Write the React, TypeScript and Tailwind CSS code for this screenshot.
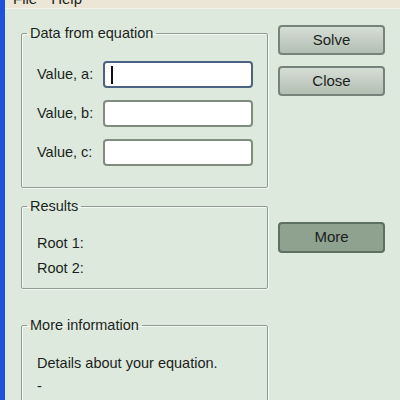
import React from "react";

const font = { fontFamily: '"Liberation Sans", Arial, sans-serif' };

function Group({
  title,
  className,
  children,
}: {
  title: string;
  className?: string;
  children: React.ReactNode;
}) {
  return (
    <fieldset
      className={`rounded-[2px] border border-[#919d91] shadow-[inset_1px_1px_0_#f4f8f4,1px_1px_0_#f4f8f4] ${className ?? ""}`}
    >
      <legend className="ml-[5px] px-[3px] text-[14.5px] leading-[18px] text-[#1b1f1b]">
        {title}
      </legend>
      {children}
    </fieldset>
  );
}

function Field({ label, focused }: { label: string; focused?: boolean }) {
  return (
    <div className="flex h-[27px] items-center">
      <span className="w-[81px] shrink-0 whitespace-nowrap pl-[15px] text-[14.5px] text-[#1b1f1b]">
        {label}
      </span>
      <div
        className={`flex h-[27px] w-[150px] items-center rounded-[4px] border-2 bg-white pl-[6px] ${
          focused ? "border-[#4b6283]" : "border-[#7f8d7f]"
        }`}
      >
        {focused && <span className="h-[18px] w-[2px] bg-[#111]" />}
      </div>
    </div>
  );
}

function Btn({ label, dark, className }: { label: string; dark?: boolean; className?: string }) {
  return (
    <button
      type="button"
      className={`flex w-[107px] items-center justify-center rounded-[4px] border-2 text-[15px] text-[#1b1f1b] ${
        dark
          ? "border-[#5e705f] bg-[#8fa290]"
          : "border-[#75837a] bg-gradient-to-b from-[#d6ddd6] to-[#b3bfb3]"
      } ${className ?? ""}`}
    >
      {label}
    </button>
  );
}

export default function App() {
  return (
    <div className="flex h-[400px] w-[400px] overflow-hidden bg-[#dde9dd]" style={font}>
      <div className="w-[5px] shrink-0 bg-[#1f50dc]" />
      <div className="flex min-w-0 flex-1 flex-col">
        <div className="h-[9px] shrink-0 overflow-hidden border-b border-[#f3f1e8] bg-[#ece6d6]">
          <div className="-mt-[10px] flex gap-[14px] pl-[8px] text-[15px] leading-[17px] text-[#1b1f1b]">
            <span>File</span>
            <span>Help</span>
          </div>
        </div>
        <div className="flex flex-1 pl-[16px]">
          <div className="flex w-[247px] flex-col pt-[15px]">
            <Group title="Data from equation" className="h-[164px]">
              <div className="flex flex-col gap-[12px] pt-[19px]">
                <Field label="Value, a:" focused />
                <Field label="Value, b:" />
                <Field label="Value, c:" />
              </div>
            </Group>
            <Group title="Results" className="mt-[9px] h-[92px]">
              <div className="flex flex-col gap-[8px] pl-[15px] pt-[20px] text-[14.5px] leading-[17px] text-[#1b1f1b]">
                <span>Root 1:</span>
                <span>Root 2:</span>
              </div>
            </Group>
            <Group title="More information" className="mt-[27px] h-[90px]">
              <div className="flex flex-col gap-[6px] pl-[15px] pt-[21px] text-[14.5px] leading-[17px] text-[#1b1f1b]">
                <span>Details about your equation.</span>
                <span>-</span>
              </div>
            </Group>
          </div>
          <div className="ml-[10px] flex flex-col pt-[16px]">
            <Btn label="Solve" className="h-[30px]" />
            <Btn label="Close" className="mt-[11px] h-[30px]" />
            <Btn label="More" dark className="mt-[126px] h-[31px]" />
          </div>
        </div>
      </div>
    </div>
  );
}
